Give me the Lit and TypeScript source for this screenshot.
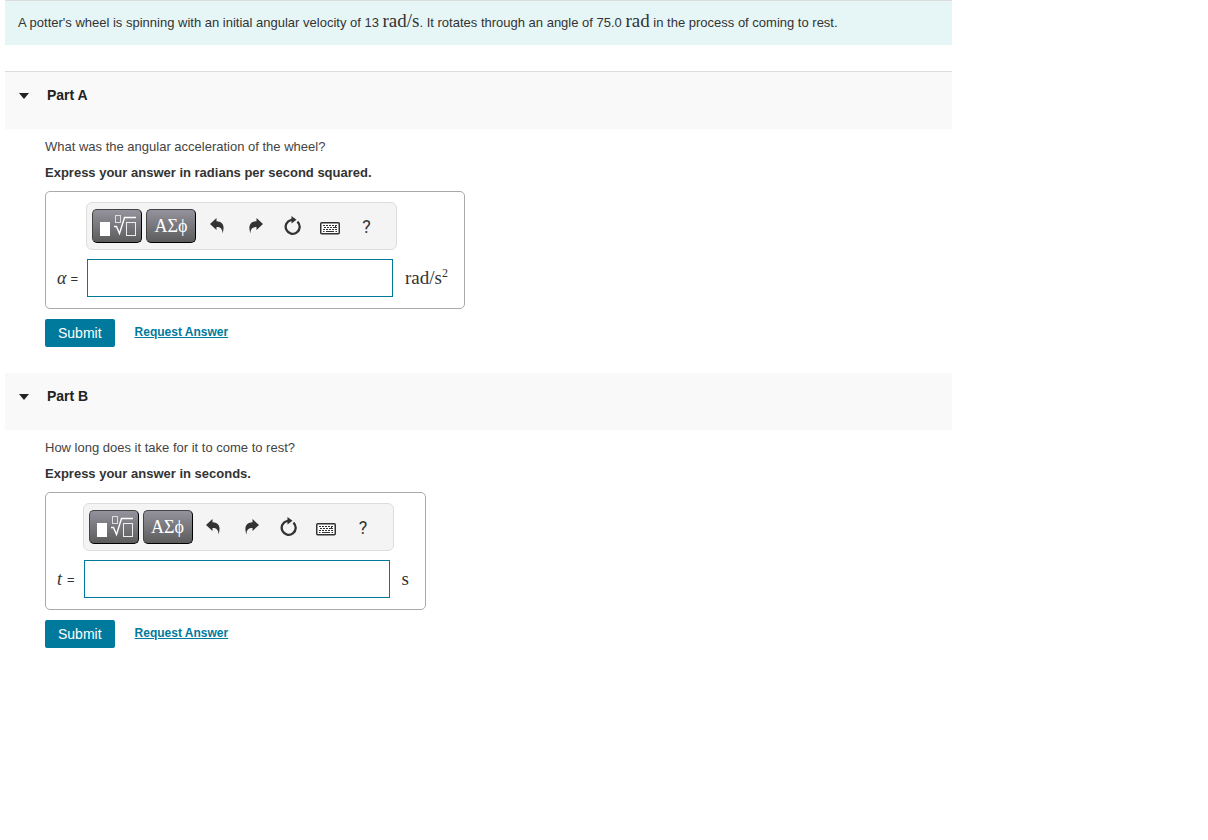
import { LitElement, html, css, svg } from "lit";
import { customElement, property } from "lit/decorators.js";

const undoIcon = svg`<path d="M0 6 L6.5 0 V3.2 C12 3.4 15.5 7 12.5 15.5 C12.6 10.8 10.5 9 6.5 9 V12 Z" fill="#333"/>`;
const redoIcon = svg`<path d="M14 6 L7.5 0 V3.2 C2 3.4 -1.5 7 1.5 15.5 C1.4 10.8 3.5 9 7.5 9 V12 Z" fill="#333"/>`;

@customElement("answer-box")
export class AnswerBox extends LitElement {
  @property() symbol = "";
  @property() unit = "";
  @property() power = "";

  static styles = css`
    :host {
      display: block;
      margin-top: 10px;
    }
    .box {
      display: inline-grid;
      grid-template-columns: auto auto auto;
      align-items: center;
      row-gap: 9px;
      box-sizing: border-box;
      padding: 10px 16px 11px 11px;
      border: 1px solid #aaa;
      border-radius: 5px;
      vertical-align: top;
    }
    .toolbar {
      grid-column: 2;
      display: flex;
      align-items: center;
      box-sizing: border-box;
      height: 48px;
      padding: 0 5px;
      border: 1px solid #ddd;
      border-radius: 6px;
      background: #f4f4f4;
    }
    button {
      display: flex;
      align-items: center;
      justify-content: center;
      box-sizing: border-box;
      padding: 0;
      font: 16px "Liberation Sans", Arial, sans-serif;
      color: #333;
      cursor: pointer;
    }
    .dark {
      width: 50px;
      height: 34px;
      margin-right: 4px;
      border: 1px solid #000;
      border-top-color: #444;
      border-left-color: #444;
      border-radius: 5px;
      background: linear-gradient(#94929c, #5c5c5c);
      color: #fff;
    }
    .greek {
      font: 18px "Liberation Serif", serif;
    }
    .tool {
      width: 37px;
      height: 34px;
      border: 0;
      background: none;
    }
    .help {
      font: 18px Roboto, "Liberation Sans", sans-serif;
    }
    .label {
      grid-column: 1;
      display: flex;
      align-items: center;
      gap: 4px;
      padding-right: 8px;
      font: 13px "Liberation Sans", Arial, sans-serif;
      color: #333;
    }
    .symbol {
      min-width: 6px;
      font: italic 18px/20px "Liberation Serif", serif;
    }
    .field {
      box-sizing: border-box;
      width: 306px;
      height: 38px;
      margin: 0 4px 0 1px;
      padding: 0 8px;
      border: 1px solid #007a9c;
      border-radius: 0;
      background: #fff;
      font: 16px "Liberation Serif", serif;
    }
    .unit {
      padding-left: 8px;
      font: 19px/20px "Liberation Serif", serif;
      color: #333;
    }
    sup {
      font-size: 12px;
      line-height: 0;
    }
  `;

  render() {
    return html`
      <div class="box">
        <div class="toolbar" role="toolbar" aria-label="Equation tools">
          <button class="dark" type="button" aria-label="Templates">
            <svg width="38" height="24" viewBox="0 0 38 24" fill="none" stroke="#fff">
              <rect x="2" y="8" width="10" height="14" fill="#fff" stroke="none" />
              <rect x="17.5" y="1.5" width="5" height="7" stroke="#ddd" />
              <path d="M16 12.5H18.5L21.5 19.5L26.5 3.5H38" stroke-width="1.4" />
              <rect x="28.5" y="8.500" width="9" height="13" stroke="#eee" />
            </svg>
          </button>
          <button class="dark greek" type="button" aria-label="Symbols">ΑΣϕ</button>
          <button class="tool" type="button" aria-label="Undo">
            <svg width="18" height="16" viewBox="0 0 18 16">${undoIcon}</svg>
          </button>
          <button class="tool" type="button" aria-label="Redo">
            <svg width="14" height="16" viewBox="0 0 14 16">${redoIcon}</svg>
          </button>
          <button class="tool" type="button" aria-label="Reset">
            <svg width="18" height="20" viewBox="0 0 18 20">
              <path d="M13.4 5.6A7 7 0 1 1 7 4H9" fill="none" stroke="#333" stroke-width="2.3" />
              <path d="M7.5 0L12.5 3.8L7.5 7.500Z" fill="#333" />
            </svg>
          </button>
          <button class="tool" type="button" aria-label="Keyboard shortcuts">
            <svg width="20" height="18" viewBox="0 0 20 18">
              <rect x="0.75" y="5.75" width="18.500" height="11" rx="1" fill="#fff" stroke="#333" stroke-width="1.500" />
              <path d="M3 8.5H17M4 10.5H17M3 12.5H17" stroke="#333" stroke-dasharray="2 1" />
              <path d="M3 14.5H4.5M6 14.5H14M15.5 14.5H17M15.5 8V11" stroke="#333" />
            </svg>
          </button>
          <button class="tool help" type="button" aria-label="Help">?</button>
        </div>
        <label class="label" for="answer"><span class="symbol">${this.symbol}</span><span>=</span></label>
        <input class="field" id="answer" type="text" autocomplete="off" />
        <span class="unit">${this.unit}${this.power ? html`<sup>${this.power}</sup>` : ""}</span>
      </div>
    `;
  }
}

@customElement("question-part")
export class QuestionPart extends LitElement {
  @property() heading = "";
  @property() question = "";
  @property() instruction = "";
  @property() symbol = "";
  @property() unit = "";
  @property() power = "";

  static styles = css`
    :host {
      display: block;
      font: 13px/16px "Liberation Sans", Arial, sans-serif;
      color: #333;
    }
    .header {
      display: flex;
      align-items: center;
      gap: 18px;
      padding: 14px 14px 24px;
      border-top: 1px solid var(--part-rule, transparent);
      background: #f9f9f9;
      background-clip: padding-box;
    }
    .arrow {
      display: block;
    }
    h2 {
      margin: 0;
      font-size: 14px;
      line-height: 19px;
      color: #222;
    }
    .body {
      padding: 10px 40px 25px;
    }
    p {
      margin: 0;
      color: #444;
    }
    .instruction {
      margin-top: 10px;
      font-weight: bold;
      color: #333;
    }
    .actions {
      display: flex;
      align-items: flex-start;
      gap: 20px;
      margin-top: 10px;
    }
    .submit {
      height: 28px;
      padding: 0 13px;
      border: 0;
      border-radius: 2px;
      background: #007a9c;
      color: #fff;
      font: 14px "Liberation Sans", Arial, sans-serif;
      cursor: pointer;
    }
    a {
      font-size: 12px;
      line-height: 26px;
      font-weight: bold;
      color: #007a9c;
    }
  `;

  render() {
    return html`
      <section>
        <header class="header">
          <svg class="arrow" width="10" height="6" viewBox="0 0 10 6"><path d="M0 0H10L5 6Z" fill="#222" /></svg>
          <h2>${this.heading}</h2>
        </header>
        <div class="body">
          <p>${this.question}</p>
          <p class="instruction">${this.instruction}</p>
          <answer-box symbol=${this.symbol} unit=${this.unit} power=${this.power}></answer-box>
          <div class="actions">
            <button class="submit" type="button">Submit</button>
            <a href="#">Request Answer</a>
          </div>
        </div>
      </section>
    `;
  }
}

@customElement("app-root")
export class AppRoot extends LitElement {
  static styles = css`
    :host {
      display: block;
      background: #fff;
      font: 13px/16px "Liberation Sans", Arial, sans-serif;
      color: #333;
    }
    main {
      max-width: 947px;
      margin-left: 5px;
    }
    .intro {
      margin: 0 0 26px;
      padding: 12px 13px;
      border-top: 1px solid #ddd;
      background: #e6f6f6;
      line-height: 20px;
    }
    .math {
      font-family: "Liberation Serif", serif;
      font-size: 19px;
      line-height: 1px;
    }
    .first {
      --part-rule: #ddd;
    }
  `;

  render() {
    return html`
      <main>
        <p class="intro">
          A potter's wheel is spinning with an initial angular velocity of 13 <span class="math">rad/s</span>. It rotates
          through an angle of 75.0 <span class="math">rad</span> in the process of coming to rest.
        </p>
        <question-part
          class="first"
          heading="Part A"
          question="What was the angular acceleration of the wheel?"
          instruction="Express your answer in radians per second squared."
          symbol="α"
          unit="rad/s"
          power="2"
        ></question-part>
        <question-part
          heading="Part B"
          question="How long does it take for it to come to rest?"
          instruction="Express your answer in seconds."
          symbol="t"
          unit="s"
        ></question-part>
      </main>
    `;
  }
}
